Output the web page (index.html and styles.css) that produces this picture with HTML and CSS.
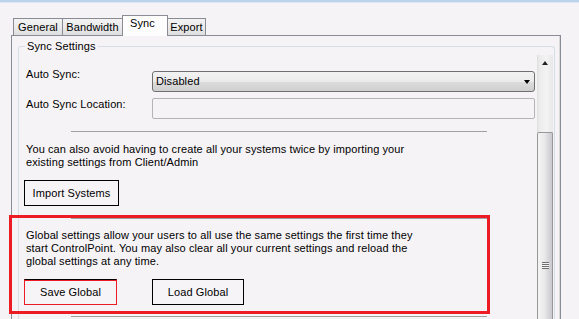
FILE: index.html
```html
<!DOCTYPE html>
<html>
<head>
<meta charset="utf-8">
<link rel="stylesheet" href="styles.css">
</head>
<body>
<div class="topbar"></div>
<div class="tabs">
  <div class="tab tab-general">General</div>
  <div class="tab tab-bandwidth">Bandwidth</div>
  <div class="tab tab-sync active">Sync</div>
  <div class="tab tab-export">Export</div>
</div>
<div class="panel">
  <fieldset class="group">
    <legend>Sync Settings</legend>
    <div class="scrollarea">
      <div class="content">
        <div class="row row-first">
          <div class="label label-up">Auto Sync:</div>
          <div class="combo"><span>Disabled</span><span class="combo-arrow"></span></div>
        </div>
        <div class="row row-second">
          <div class="label">Auto Sync Location:</div>
          <div class="textbox"></div>
        </div>
        <div class="separator sep-1"></div>
        <p class="para para-1">You can also avoid having to create all your systems twice by importing your<br>existing settings from Client/Admin</p>
        <div class="buttons buttons-1">
          <div class="btn btn-import">Import Systems</div>
        </div>
        <div class="separator sep-2"></div>
        <p class="para para-2">Global settings allow your users to all use the same settings the first time they<br>start ControlPoint. You may also clear all your current settings and reload the<br>global settings at any time.</p>
        <div class="buttons buttons-2">
          <div class="btn btn-save">Save Global</div>
          <div class="btn btn-load">Load Global</div>
        </div>
        <div class="separator sep-3"></div>
      </div>
      <div class="scrollbar">
        <div class="sb-up"><span class="sb-up-arrow"></span></div>
        <div class="sb-track"></div>
        <div class="sb-thumb"><div class="sb-grip"></div></div>
      </div>
    </div>
  </fieldset>
</div>
<div class="annotation"></div>
</body>
</html>
```

FILE: styles.css
```css
html, body {
  margin: 0;
  padding: 0;
}
body {
  width: 579px;
  height: 319px;
  overflow: hidden;
  position: relative;
  background: #f6f3f6;
  font-family: "Liberation Sans", Arial, sans-serif;
  font-size: 11px;
  letter-spacing: 0.1px;
  color: #000;
}
.topbar {
  height: 2px;
  background: #bcd3ec;
  border-bottom: 1px solid #dde7f3;
}
.tabs {
  display: flex;
  align-items: flex-end;
  height: 20px;
  margin-top: 12px;
  padding-left: 13px;
  position: relative;
  z-index: 2;
}
.tab {
  box-sizing: border-box;
  height: 17px;
  margin-left: -1px;
  border: 1px solid #898c95;
  border-bottom: none;
  background: linear-gradient(#f3f3f3, #ebebeb 50%, #dedede);
  line-height: 16px;
  text-align: center;
  white-space: nowrap;
}
.tab:first-child { margin-left: 0; }
.tab-general { width: 50px; }
.tab-bandwidth { width: 61px; }
.tab-sync { width: 46px; }
.tab-export { width: 39px; }
.tab.active {
  height: 21px;
  margin-bottom: -1px;
  background: #fdfdfe;
  text-align: left;
  padding-left: 7px;
  line-height: 14px;
  position: relative;
  z-index: 3;
}
.panel {
  box-sizing: border-box;
  margin-left: 11px;
  width: 550px;
  height: 284px;
  border: 1px solid #898c95;
  border-bottom: none;
  box-shadow: inset -1px 0 0 #d8d8d8;
  padding: 4px 5px 0 6px;
  position: relative;
  z-index: 1;
}
.group {
  margin: 0;
  padding: 2px 1px 0 0;
  border: 1px solid #d5dfe5;
  border-bottom: none;
  border-radius: 3px 3px 0 0;
  min-width: 0;
}
.group legend {
  margin-left: 6px;
  padding: 0 2px;
  line-height: 13px;
}
.scrollarea {
  display: flex;
  height: 270px;
}
.content {
  flex: 1;
  padding-left: 7px;
  min-width: 0;
}
.row {
  display: flex;
  align-items: flex-start;
}
.row-first { margin-top: 16px; }
.row-second { margin-top: 6px; }
.label {
  width: 126px;
  line-height: 13px;
  white-space: nowrap;
}
.label-up { margin-top: -3px; }
.combo {
  box-sizing: border-box;
  width: 383px;
  height: 21px;
  border: 1px solid #707070;
  border-radius: 3px;
  background: linear-gradient(#f2f2f2, #ebebeb 50%, #dddddd 51%, #cfcfcf);
  display: flex;
  align-items: center;
  justify-content: space-between;
  padding: 0 4px 0 3px;
  line-height: 19px;
}
.combo-arrow {
  width: 0;
  height: 0;
  border-left: 3.5px solid transparent;
  border-right: 3.5px solid transparent;
  border-top: 4px solid #000;
  margin-right: 0;
}
.textbox {
  box-sizing: border-box;
  width: 383px;
  height: 21px;
  border: 1px solid #b4b4b4;
  border-radius: 2px;
  background: #f6f3f6;
}
.separator {
  margin-left: 45px;
  width: 416px;
  height: 1px;
  background: #a0a0a0;
}
.sep-1 { margin-top: 12px; }
.sep-2 { margin-top: 12px; }
.sep-3 { margin-top: 11px; }
.para {
  margin: 0;
  line-height: 13px;
  white-space: nowrap;
}
.para-1 { margin-top: 11px; }
.para-2 { margin-top: 10px; }
.buttons {
  display: flex;
  gap: 35px;
  margin-left: -2px;
}
.buttons-1 { margin-top: 11px; }
.buttons-2 { margin-top: 11px; }
.btn {
  box-sizing: border-box;
  height: 26px;
  border: 1px solid #000;
  background: #f7f4f7;
  text-align: center;
  line-height: 24px;
  white-space: nowrap;
}
.btn-import { width: 95px; }
.btn-save {
  width: 93px;
  border-color: #ec1c24;
  border-top-color: #000;
  box-shadow: inset 0 1px 0 #ec1c24;
}
.btn-load { width: 92px; }
.scrollbar {
  width: 16px;
  display: flex;
  flex-direction: column;
  background: linear-gradient(to right, #dcdcdc, #ebebeb 2px, #f3f3f3 60%, #e8e8e8);
}
.sb-up {
  height: 17px;
  display: flex;
  justify-content: center;
  align-items: center;
}
.sb-up-arrow {
  width: 0;
  height: 0;
  border-left: 3px solid transparent;
  border-right: 3px solid transparent;
  border-bottom: 4px solid #222;
  margin-top: -2px;
}
.sb-track {
  height: 60px;
}
.sb-thumb {
  flex: 1;
  box-sizing: border-box;
  border: 1px solid #979797;
  border-bottom: none;
  border-radius: 2px 2px 0 0;
  background: linear-gradient(to right, #f4f4f4, #eaeaea 45%, #dadade 70%, #c9c9ce);
  display: flex;
  justify-content: center;
  padding-top: 129px;
}
.sb-grip {
  width: 7px;
  height: 7px;
  background: repeating-linear-gradient(#6f6f6f 0, #6f6f6f 1px, #f4f4f4 1px, #f4f4f4 2px);
}
.annotation {
  position: absolute;
  left: 9px;
  top: 215px;
  width: 481px;
  height: 99px;
  box-sizing: border-box;
  border: 3px solid #ec1c24;
  z-index: 5;
}
```
